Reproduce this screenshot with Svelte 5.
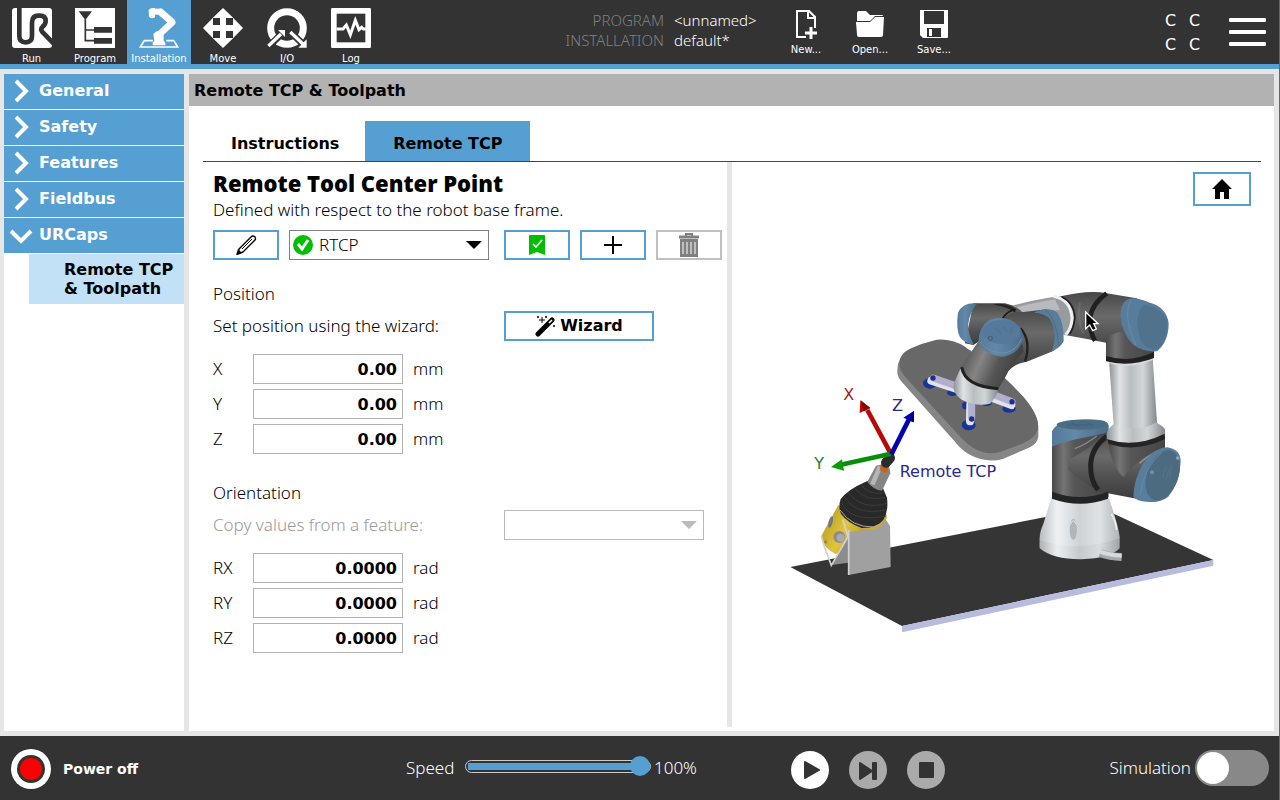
<script lang="ts">
  const sections = ['General', 'Safety', 'Features', 'Fieldbus', 'URCaps'];

  let openSection = $state('URCaps');
  let activeView = $state('Installation');
  let activeTab = $state('Remote TCP');
  let speed = $state(100);
  let simulation = $state(false);

  let position = $state([
    { axis: 'X', value: '0.00' },
    { axis: 'Y', value: '0.00' },
    { axis: 'Z', value: '0.00' },
  ]);

  let orientation = $state([
    { axis: 'RX', value: '0.0000' },
    { axis: 'RY', value: '0.0000' },
    { axis: 'RZ', value: '0.0000' },
  ]);
</script>

{#snippet viewButton(name: string, icon: any)}
  <button class="view" class:active={activeView === name} onclick={() => (activeView = name)}>
    <svg width="40" height="40" viewBox="0 0 120 120" fill="none">{@render icon()}</svg>
    <span>{name}</span>
  </button>
{/snippet}

{#snippet runIcon()}
  <rect width="120" height="120" rx="9" fill="#fff" />
  <path d="M22 -4V84Q22 103 41 103Q60 103 60 84V44Q60 23 80 23H84Q101 23 101 39Q101 49 92 56Q84 63 91 72L126 108" stroke="#333" stroke-width="14" />
{/snippet}

{#snippet programIcon()}
  <rect width="120" height="120" fill="#fff" />
  <path d="M11 10H51L31 36Z" fill="#333" />
  <path d="M57 57h54v17H57zM57 90h54v17H57z" fill="#333" />
  <path d="M31 34V98H57M31 66H57" stroke="#333" stroke-width="5" />
{/snippet}

{#snippet installIcon()}
  <path d="M42 98H16L4 117H116L104 98H82" stroke="#fff" stroke-width="5" />
  <path d="M38 11H68" stroke="#fff" stroke-width="18" />
  <path d="M29 6Q32 1 40 0H48V28Q38 34 30 26Z" fill="#fff" />
  <path d="M66 13L98 41" stroke="#fff" stroke-width="21" stroke-linecap="round" />
  <path d="M99 44L60 80" stroke="#fff" stroke-width="20" stroke-linecap="round" />
  <path d="M43 78Q58 60 74 78V98L79 104V112H41V104L46 98Z" fill="#fff" />
{/snippet}

{#snippet moveIcon()}
  <path d="M60 0L91 30H29zM60 120L91 90H29zM0 60L30 29V91zM120 60L90 29V91z" fill="#fff" />
  <path d="M60 20V100M20 60H100" stroke="#fff" stroke-width="18" />
{/snippet}

{#snippet ioIcon()}
  <circle cx="60" cy="60" r="49" stroke="#fff" stroke-width="21" />
  <path d="M4 116L50 72M70 72L116 116" stroke="#333" stroke-width="20" />
  <path d="M30 60H60V92zM88 120H124V88z" fill="#333" />
  <path d="M4 114L42 78M70 72L108 108" stroke="#fff" stroke-width="10" />
  <path d="M33 66H54V87zM94 119H119V94z" fill="#fff" />
{/snippet}

{#snippet logIcon()}
  <rect width="120" height="120" rx="4" fill="#fff" />
  <rect x="17" y="17" width="86" height="86" fill="#333" />
  <path d="M17 63H36L46 51L58 80L73 37L84 65L92 58L97 63H104" stroke="#fff" stroke-width="9" />
{/snippet}

<div class="app">
  <header>
    <nav class="views">
      {@render viewButton('Run', runIcon)}
      {@render viewButton('Program', programIcon)}
      {@render viewButton('Installation', installIcon)}
      {@render viewButton('Move', moveIcon)}
      {@render viewButton('I/O', ioIcon)}
      {@render viewButton('Log', logIcon)}
    </nav>

    <dl class="files">
      <dt>PROGRAM</dt>
      <dd>&lt;unnamed&gt;</dd>
      <dt>INSTALLATION</dt>
      <dd>default*</dd>
    </dl>

    <div class="file-actions">
      <button>
        <svg width="30" height="30" viewBox="0 0 30 30" fill="none" stroke="#fff" stroke-width="2">
          <path d="M15 28H6V2H18L24 8V19" />
          <path d="M17 2V9H24" />
          <path d="M20 18V30M14 24H26" stroke-width="3" />
        </svg>
        <span>New...</span>
      </button>
      <button>
        <svg width="30" height="30" viewBox="0 0 30 30" fill="#fff">
          <path d="M2 12V4Q2 2 4 2H11L15 6H27Q28 6 28 7H20L15 12Z" />
          <path d="M1 13H15L20 8H29L28 26Q28 28 26 28H4Q2 28 2 26Z" />
        </svg>
        <span>Open...</span>
      </button>
      <button>
        <svg width="30" height="30" viewBox="0 0 30 30">
          <path d="M1 1H29V28Q29 29 28 29H4L1 26Z" fill="#fff" />
          <path d="M5 2H25V15H5zM8 19H22V28H8z" fill="#333" />
          <path d="M10 20H13V27H10z" fill="#fff" />
        </svg>
        <span>Save...</span>
      </button>
    </div>

    <div class="checksum">
      <span>C</span><span>C</span><span>C</span><span>C</span>
    </div>
    <button class="menu" aria-label="Menu"><i></i><i></i><i></i></button>
  </header>

  <div class="body">
    <aside>
      {#each sections as section}
        <button class="section" onclick={() => (openSection = section)}>
          <svg width="24" height="24" viewBox="0 0 24 24" fill="none" stroke="#fff" stroke-width="4">
            {#if openSection === section}
              <path d="M2 8L12 18L22 8" />
            {:else}
              <path d="M7 2L17 12L7 22" />
            {/if}
          </svg>
          {section}
        </button>
      {/each}
      <a class="sub" href="#remote-tcp">Remote TCP<br />&amp; Toolpath</a>
    </aside>

    <main>
      <h1>Remote TCP &amp; Toolpath</h1>

      <div class="tabs">
        {#each ['Instructions', 'Remote TCP'] as tab}
          <button class:active={activeTab === tab} onclick={() => (activeTab = tab)}>{tab}</button>
        {/each}
      </div>

      <div class="panels">
        <section class="form">
          <h2>Remote Tool Center Point</h2>
          <p>Defined with respect to the robot base frame.</p>

          <div class="toolbar">
            <button class="btn" aria-label="Rename">
              <svg width="22" height="22" viewBox="0 0 22 22" fill="none" stroke="#000" stroke-width="1.4">
                <path d="M4 15L16 3Q18 1 20 3Q21 5 20 6L8 18L3 20Z" />
                <path d="M7 15L17 5" stroke-width="1" />
                <path d="M1 21L3 15L7 19Z" fill="#000" stroke="none" />
              </svg>
            </button>
            <div class="combo tcp">
              <svg class="check" width="20" height="20" viewBox="0 0 20 20">
                <circle cx="10" cy="10" r="10" fill="#00be00" />
                <path d="M5 9L9 14L15 5" fill="none" stroke="#fff" stroke-width="3" />
              </svg>
              <select aria-label="Tool center point">
                <option>RTCP</option>
              </select>
              <svg class="arrow" width="16" height="8" viewBox="0 0 16 8"><path d="M0 0H16L8 8Z" /></svg>
            </div>
            <button class="btn" aria-label="Set as default">
              <svg width="16" height="20" viewBox="0 0 16 20">
                <path d="M0 1Q0 0 1 0H15Q16 0 16 1V20L8 17L0 20Z" fill="#00be00" />
                <path d="M4 9L7 12L13 5" fill="none" stroke="#fff" stroke-width="1.6" />
              </svg>
            </button>
            <button class="btn" aria-label="Add">
              <svg width="18" height="18" viewBox="0 0 18 18"><path d="M9 0V18M0 9H18" stroke="#000" stroke-width="2" /></svg>
            </button>
            <button class="btn" aria-label="Delete" disabled>
              <svg width="22" height="24" viewBox="0 0 22 24" fill="none">
                <path d="M1 4H21" stroke="#808080" stroke-width="3" />
                <path d="M8 3V1H14V3" stroke="#808080" stroke-width="2" />
                <path d="M2 6H20V24H2Z" fill="#808080" />
                <path d="M5 9V21M9 9V21M13 9V21M17 9V21" stroke="#fff" stroke-width="1" />
              </svg>
            </button>
          </div>

          <h3>Position</h3>
          <div class="source">
            <span>Set position using the wizard:</span>
            <button class="btn wizard">
              <svg width="21" height="21" viewBox="0 0 21 21">
                <path d="M3 18L17 4" stroke="#000" stroke-width="5" stroke-linecap="round" />
                <path d="M14 7L17 4" stroke="#fff" stroke-width="1.6" />
                <path d="M7 1V7M4 4H10M3 0V2M2 1H4M11 0V2M10 1H12M19 9V11M18 10H20" stroke="#000" />
              </svg>
              Wizard
            </button>
          </div>
          <div class="fields">
            {#each position as field}
              <label for={field.axis}>{field.axis}</label>
              <input id={field.axis} type="text" bind:value={field.value} />
              <span>mm</span>
            {/each}
          </div>

          <h3>Orientation</h3>
          <div class="source disabled">
            <label for="feature">Copy values from a feature:</label>
            <div class="combo">
              <select id="feature" disabled><option></option></select>
              <svg class="arrow" width="16" height="8" viewBox="0 0 16 8"><path d="M0 0H16L8 8Z" /></svg>
            </div>
          </div>
          <div class="fields">
            {#each orientation as field}
              <label for={field.axis}>{field.axis}</label>
              <input id={field.axis} type="text" bind:value={field.value} />
              <span>rad</span>
            {/each}
          </div>
        </section>

        <section class="preview">
          <button class="btn home" aria-label="Home">
            <svg width="20" height="20" viewBox="0 0 20 20"><path d="M10 0L20 10H17V20H12V13H8V20H3V10H0Z" /></svg>
          </button>

          <svg class="scene" viewBox="0 0 1350 1080">
            <defs>
              <linearGradient id="metal">
                <stop offset="0" stop-color="#8d9294" />
                <stop offset=".22" stop-color="#dfe3e5" />
                <stop offset=".45" stop-color="#b9bec1" />
                <stop offset=".7" stop-color="#d2d6d8" />
                <stop offset="1" stop-color="#82888a" />
              </linearGradient>
              <linearGradient id="cone">
                <stop offset="0" stop-color="#aab0b3" />
                <stop offset=".22" stop-color="#eceff1" />
                <stop offset=".5" stop-color="#c4c9cc" />
                <stop offset=".75" stop-color="#d9dddf" />
                <stop offset="1" stop-color="#9ea4a7" />
              </linearGradient>
              <linearGradient id="dark">
                <stop offset="0" stop-color="#484848" />
                <stop offset=".2" stop-color="#747474" />
                <stop offset=".4" stop-color="#565656" />
                <stop offset="1" stop-color="#454545" />
              </linearGradient>
              <linearGradient id="darkDown" x2="0" y2="1">
                <stop offset="0" stop-color="#484848" />
                <stop offset=".35" stop-color="#6a6a6a" />
                <stop offset=".65" stop-color="#525252" />
                <stop offset="1" stop-color="#3c3c3c" />
              </linearGradient>
              <linearGradient id="barrel" x1="0" y1=".3" x2="1" y2=".75">
                <stop offset="0" stop-color="#444" />
                <stop offset=".35" stop-color="#858585" />
                <stop offset=".6" stop-color="#555" />
                <stop offset="1" stop-color="#343434" />
              </linearGradient>
              <linearGradient id="blue">
                <stop offset="0" stop-color="#55799a" />
                <stop offset=".4" stop-color="#6289a8" />
                <stop offset="1" stop-color="#4b6c87" />
              </linearGradient>
              <linearGradient id="yellow" x2="1" y2=".4">
                <stop offset="0" stop-color="#a8901d" />
                <stop offset=".5" stop-color="#e2c53d" />
                <stop offset="1" stop-color="#a58b20" />
              </linearGradient>
            </defs>

            <!-- table -->
            <path d="M31 861L936 684L990 696L1300 840L366 1038Z" fill="#353535" />
            <path d="M366 1038L1300 840V857L366 1057Z" fill="#b7bbdd" />

            <!-- base and shoulder -->
            <g transform="translate(690 360)">
              <path d="M125 290L100 372Q86 400 89 445Q130 479 215 478Q300 475 329 445V410Q325 375 295 290Z" fill="url(#cone)" />
              <path d="M125 290L100 372Q86 400 89 420Q200 460 329 415Q325 375 295 290Z" fill="#fff" opacity=".18" />
              <ellipse cx="190" cy="388" rx="11" ry="32" fill="#b0b6b9" />
              <path d="M181 374Q190 350 199 374" stroke="#e5e8e9" stroke-width="3" fill="none" />
              <path d="M304 342Q316 360 320 390" stroke="#eef1f2" stroke-width="5" fill="none" />
              <path d="M270 459Q300 470 335 471" stroke="#a2a9ac" stroke-width="24" fill="none" />
              <path d="M270 455Q300 466 335 467" stroke="#d6dadc" stroke-width="12" fill="none" />
              <path d="M126 120L292 75L296 290Q210 320 126 292Z" fill="url(#dark)" />
              <path d="M175 180Q235 150 285 98L465 105V145L380 296L270 275Q215 245 175 210Z" fill="url(#darkDown)" />
              <path d="M295 120Q300 190 340 232Q370 190 430 155L465 140V105Q380 145 295 120Z" fill="url(#dark)" />
              <path d="M194 146Q230 132 260 108" stroke="#888" stroke-width="4" fill="none" />
              <path d="M389 190Q410 170 440 156" stroke="#999" stroke-width="4" fill="none" />
              <path d="M291 109Q246 140 242 192Q240 240 264 270" stroke="#222" stroke-width="15" fill="none" />
              <path d="M126 275Q210 307 294 275V296Q210 326 126 296Z" fill="#242424" />
              <path d="M126 140V94Q133 75 165 65Q220 53 275 61Q293 64 296 76V96Q270 104 220 113Q160 124 126 140Z" fill="url(#blue)" />
              <ellipse cx="215" cy="74" rx="75" ry="15" fill="#4b6c85" />
              <path d="M172 75h70M185 70l25 8M230 69l20 6" stroke="#42627a" stroke-width="3" />
              <path d="M370 290Q372 235 400 190Q430 145 472 142Q512 148 512 185Q510 245 475 290Q448 311 410 305Q380 303 370 290Z" fill="#587e9d" />
              <ellipse cx="458" cy="226" rx="47" ry="78" transform="rotate(20 458 226)" fill="#4c6a80" />
              <path d="M390 285Q400 205 455 157" stroke="#6688a3" stroke-width="3" fill="none" />
              <path d="M460 238Q457 215 470 202M468 240Q475 215 480 205M484 195L480 238" stroke="#587389" stroke-width="3" fill="none" />
              <circle cx="426" cy="217" r="6" fill="#6f93ae" />
              <circle cx="503" cy="174" r="5" fill="#8cabc2" />
            </g>

            <!-- elbow, forearm and wrist -->
            <g transform="translate(330 0)">
              <path d="M657 240L672 450Q740 480 802 440L788 235Z" fill="url(#metal)" />
              <path d="M671 432Q654 445 650 462V478Q730 510 825 465V448Q816 436 798 427Q745 462 671 432Z" fill="url(#metal)" />
              <path d="M652 478Q735 505 824 461V478Q740 518 656 492Z" fill="#242424" />
              <path d="M658 247Q720 266 790 237" stroke="#d6dadc" stroke-width="5" fill="none" />

              <path d="M505 50Q600 28 650 40L740 55L790 100V228Q720 255 648 234V188L595 178L525 165Z" fill="url(#darkDown)" />
              <path d="M648 188Q650 165 690 155L792 200V228Q720 255 648 234Z" fill="url(#dark)" />
              <path d="M648 228Q720 250 792 216V234Q720 262 648 244Z" fill="#202020" />
              <path d="M650 40Q605 72 600 115Q598 155 615 182" stroke="#202020" stroke-width="14" fill="none" />
              <path d="M570 70Q560 115 580 160" stroke="#777" stroke-width="6" fill="none" opacity=".6" />
              <path d="M692 110Q690 65 718 56Q738 50 780 68Q830 82 836 130Q836 185 802 213Q770 220 730 195Q696 160 692 110Z" fill="#587d9b" />
              <path d="M760 75Q810 80 832 120Q836 180 802 209Q750 210 745 150Q735 105 760 75Z" fill="#50728d" />
              <path d="M725 58Q695 105 738 195" stroke="#6487a3" stroke-width="4" fill="none" />

              <path d="M370 76Q430 60 505 49Q548 58 552 112Q550 148 527 166L430 130Z" fill="#979c9e" />
              <path d="M380 82Q430 68 495 58L510 90L430 95L400 98Z" fill="#cdd1d3" opacity=".6" />
              <path d="M490 49Q543 58 546 115Q544 148 527 164" stroke="#eef1f2" stroke-width="9" fill="none" />
              <path d="M515 50Q552 68 555 112Q552 145 538 163" stroke="#222" stroke-width="5" fill="none" />

              <path d="M250 70H345Q380 76 400 100L340 140L250 195L225 190Z" fill="url(#darkDown)" />
              <path d="M310 72Q350 68 378 88L375 98Q350 80 320 76Z" fill="#242424" />
              <path d="M262 70Q218 66 204 98Q197 145 210 172Q225 192 252 194Q213 130 262 70Z" fill="url(#blue)" />

              <!-- workpiece -->
              <path d="M22 270Q22 230 60 208L140 182L240 210L400 350Q446 405 445 445V470Q442 490 420 502L340 536Q290 552 235 522Q210 505 195 485L35 305Q20 290 22 270Z" fill="#858585" />
              <path d="M28 250Q28 222 60 206Q100 188 140 179Q185 175 225 200L345 295Q415 360 434 400Q448 428 443 450Q436 474 400 490L330 516Q290 528 252 505Q230 492 215 475L45 290Q28 270 28 250Z" fill="#686868" />

              <!-- vacuum gripper -->
              <g fill="#173597">
                <ellipse cx="120" cy="310" rx="21" ry="16" />
                <ellipse cx="187" cy="338" rx="16" ry="10" />
                <ellipse cx="226" cy="377" rx="10" ry="11" />
                <ellipse cx="290" cy="370" rx="15" ry="8" />
                <ellipse cx="357" cy="386" rx="20" ry="12" />
                <ellipse cx="236" cy="435" rx="21" ry="16" />
              </g>
              <g stroke-linecap="round" fill="none">
                <path d="M124 302L200 327M310 355L364 375M241 372L240 424" stroke="#e2e2ee" stroke-width="24" />
                <path d="M130 294L205 320M312 344L366 365M245 370L245 414" stroke="#b0b0cc" stroke-width="21" />
              </g>
              <g fill="#1b318c">
                <circle cx="129" cy="294" r="8" />
                <circle cx="366" cy="365" r="8" />
                <circle cx="245" cy="417" r="8" />
              </g>

              <path d="M340 115Q360 94 400 96L470 88L520 185L490 213L410 245Q370 250 345 285Z" fill="url(#darkDown)" />
              <path d="M338 115Q350 94 376 88" stroke="#1d1d1d" stroke-width="5" fill="none" />
              <path d="M432 98Q475 78 502 98Q523 130 521 184Q508 207 485 213Q505 160 480 118Q462 98 432 98Z" fill="#587d9b" />
              <path d="M468 90Q500 120 507 198" stroke="#4b6d88" stroke-width="3" fill="none" />
              <path d="M392 145Q425 185 405 244" stroke="#202020" stroke-width="7" fill="none" />
              <path d="M268 180L214 260Q205 295 320 332Q345 300 360 262L400 215Q400 150 330 140Z" fill="url(#barrel)" />
              <path d="M212 265L192 308Q184 338 215 359Q260 381 300 371Q318 355 325 328Q250 330 212 265Z" fill="url(#metal)" />
              <path d="M215 262Q225 320 325 326" stroke="#202020" stroke-width="9" fill="none" />
              <path d="M265 188Q266 140 297 121Q335 105 372 125Q402 147 399 180Q385 222 340 230Q284 225 265 188Z" fill="url(#blue)" />
              <ellipse cx="335" cy="156" rx="56" ry="36" fill="#55799a" />
              <path d="M271 186Q300 222 345 219Q382 210 395 175" stroke="#6c91ad" stroke-width="3" fill="none" />
              <path d="M315 142l20 20M340 140l12 14M365 145l-3 18" stroke="#4e708b" stroke-width="3" />
              <circle cx="301" cy="175" r="6" fill="none" stroke="#3c5c75" stroke-width="3" />
            </g>

            <!-- dispenser, coordinate axes -->
            <g transform="translate(0 150)">
              <path d="M175 525L124 618Q125 650 165 671L188 672L300 600Z" fill="url(#yellow)" />
              <ellipse cx="152" cy="576" rx="6" ry="18" transform="rotate(15 152 576)" fill="#777" />
              <circle cx="178" cy="621" r="18" fill="#8d8d8d" />
              <circle cx="182" cy="623" r="12" fill="#aaa" />
              <circle cx="137" cy="636" r="5" fill="#a08a3a" />
              <path d="M155 705L204 622V698Z" fill="#8c8c8c" />
              <path d="M188 568L206 606Q265 605 316 566L330 588L332 711L206 735V606Z" fill="#a0a0a0" />
              <path d="M124 616Q125 630 154 706L204 620L188 568M206 600V735" stroke="#d2d2d2" stroke-width="5" fill="none" />
              <path d="M178 540Q200 580 250 594Q300 592 320 552L320 565Q305 595 278 600Q220 600 180 550Z" fill="#c8aa34" />
              <path d="M262 453Q200 480 182 508Q174 530 183 552Q205 580 245 594Q290 595 310 570Q326 545 321 503L309 475Z" fill="#292929" />
              <g fill="none" stroke="#3c3c3c" stroke-width="3">
                <path d="M184 518Q215 580 318 558" />
                <path d="M193 500Q230 560 320 539" />
                <path d="M205 487Q245 542 321 520" />
                <path d="M224 475Q262 518 316 502" />
                <path d="M242 466Q275 498 312 488" />
              </g>
              <path d="M180 540Q215 592 280 591Q300 585 313 570" fill="none" stroke="#a7a7a7" stroke-width="3" />
              <path d="M288 407L262 455Q280 480 306 482L331 430Q330 405 310 402Z" fill="#858585" />
              <path d="M300 410L277 464" stroke="#b5b5b5" stroke-width="14" />
              <path d="M309 425L318 400" stroke="#c4651b" stroke-width="23" />
              <path d="M318 398L330 384" stroke="#2c2c2c" stroke-width="30" stroke-linecap="round" />
              <path d="M332 370L262 240" stroke="#b80808" stroke-width="14" />
              <path d="M333 371L182 404" stroke="#0a8e0a" stroke-width="14" />
              <path d="M334 373L388 266" stroke="#0000b0" stroke-width="14" />
              <path d="M241 211L239 249L271 234Z" fill="#bd0909" />
              <path d="M242 211L252 244L271 234Z" fill="#850808" />
              <path d="M153 411L186 388L192 422Z" fill="#079d07" />
              <path d="M402 242L370 263L402 277Z" fill="#0000b8" />
              <path d="M402 242L388 272L402 277Z" fill="#00006e" />
              <g font-size="48">
                <text x="190" y="211" fill="#a41e1e">X</text>
                <text x="336" y="242" fill="#29298e">Z</text>
                <text x="103" y="417" fill="#287d28">Y</text>
                <text x="359" y="440" fill="#29298e">Remote TCP</text>
              </g>
            </g>

            <path d="M917 96V146L929 135L938 152L949 147L941 131H954Z" fill="#000" stroke="#fff" stroke-width="4" />
          </svg>
        </section>
      </div>
    </main>
  </div>

  <footer>
    <button class="power">
      <svg width="40" height="40" viewBox="0 0 40 40">
        <circle cx="20" cy="20" r="20" fill="#fff" />
        <circle cx="20" cy="20" r="14" fill="#333" />
        <circle cx="20" cy="20" r="11" fill="#f00" />
      </svg>
      Power off
    </button>

    <div class="speed">
      <label for="speed">Speed</label>
      <input id="speed" type="range" min="0" max="100" bind:value={speed} />
      <output for="speed">{speed}%</output>
    </div>

    <div class="playback">
      <button aria-label="Play">
        <svg width="38" height="38" viewBox="0 0 38 38">
          <circle cx="19" cy="19" r="19" fill="#fff" />
          <path d="M14 11L28 19L14 27Z" fill="#333" stroke="#333" stroke-width="2" stroke-linejoin="round" />
        </svg>
      </button>
      <button aria-label="Step" disabled>
        <svg width="38" height="38" viewBox="0 0 38 38">
          <circle cx="19" cy="19" r="19" fill="#aaa" />
          <path d="M11 12L23 20L11 28Z" fill="#333" stroke="#333" stroke-width="2" stroke-linejoin="round" />
          <rect x="23" y="11" width="5" height="18" rx="1" fill="#333" />
        </svg>
      </button>
      <button aria-label="Stop" disabled>
        <svg width="38" height="38" viewBox="0 0 38 38">
          <circle cx="19" cy="19" r="19" fill="#aaa" />
          <rect x="12" y="11" width="15" height="16" rx="1" fill="#333" />
        </svg>
      </button>
    </div>

    <label class="simulation">
      Simulation
      <input type="checkbox" bind:checked={simulation} />
    </label>
  </footer>
</div>

<style>
  :global(body) {
    background: #e6e6e6;
  }

  .app {
    --blue: #569fd3;
    --dark: #333;
    box-sizing: border-box;
    display: flex;
    flex-direction: column;
    min-height: 100vh;
    border-right: 1px solid #666;
    background: #e6e6e6;
    color: #000;
    font-family: 'Noto Sans', sans-serif;
    font-size: 17px;
    font-weight: 300;
    line-height: 20px;
  }

  button,
  input,
  select {
    box-sizing: border-box;
    margin: 0;
    padding: 0;
    border: none;
    background: none;
    color: inherit;
    font: inherit;
  }

  svg {
    display: block;
    flex: none;
  }

  .section,
  .sub,
  h1,
  .tabs button,
  .btn,
  .fields input {
    font-family: 'DejaVu Sans', sans-serif;
    font-size: 16px;
    font-weight: 700;
  }

  header {
    display: flex;
    height: 64px;
    border-bottom: 5px solid var(--blue);
    background: var(--dark);
    color: #fff;
  }

  .views {
    display: flex;
    flex: 1;
  }

  .view,
  .file-actions button {
    display: flex;
    flex-direction: column;
    align-items: center;
    gap: 5px;
    width: 64px;
    padding-top: 8px;
    font-family: 'DejaVu Sans', sans-serif;
    font-size: 10px;
    font-weight: 400;
    line-height: 12px;
  }

  .view:first-child {
    width: 63px;
  }

  .view.active {
    background: var(--blue);
  }

  .files {
    display: grid;
    grid-template-columns: auto 90px;
    align-content: start;
    column-gap: 10px;
    margin: 10px 0 0;
    font-size: 15px;
  }

  dt {
    color: #808080;
    text-align: right;
  }

  dd {
    margin: 0;
  }

  .file-actions {
    display: flex;
    margin-left: 10px;
  }

  .file-actions button {
    padding-top: 9px;
  }

  .checksum {
    display: grid;
    grid-template-columns: 24px 24px;
    align-content: center;
    margin-left: 199px;
    padding-top: 2px;
    font-family: 'DejaVu Sans', sans-serif;
    font-size: 16px;
    font-weight: 400;
    line-height: 24px;
  }

  .menu {
    display: flex;
    flex-direction: column;
    gap: 8px;
    width: 37px;
    margin: 18px 13px 0 16px;
  }

  .menu i {
    height: 4px;
    border-radius: 1px;
    background: #fff;
  }

  .body {
    display: flex;
    flex: 1;
    gap: 5px;
    padding: 5px 5px 5px 4px;
  }

  aside {
    width: 180px;
    background: #fff;
  }

  .section {
    display: flex;
    align-items: center;
    gap: 6px;
    width: 100%;
    height: 36px;
    padding: 0 5px 2px;
    border-bottom: 1px solid #fff;
    background: var(--blue);
    color: #fff;
  }

  .sub {
    display: block;
    margin-left: 25px;
    padding: 6px 0 6px 35px;
    background: #c2e0f6;
    color: #000;
    line-height: 19px;
    text-decoration: none;
  }

  main {
    display: flex;
    flex-direction: column;
    flex: 1;
    background: #fff;
  }

  h1 {
    margin: 0;
    padding: 7px 5px 5px;
    background: #b2b2b2;
  }

  .tabs {
    display: flex;
    margin: 15px 13px 0 14px;
    padding-left: 2px;
    border-bottom: 1px solid #444;
  }

  .tabs button {
    min-width: 160px;
    height: 40px;
    padding: 5px 26px 0;
  }

  .tabs .active {
    min-width: 165px;
    background: var(--blue);
  }

  .panels {
    display: flex;
    flex: 1;
    padding-bottom: 4px;
  }

  .form {
    width: 514px;
    padding: 7px 0 0 24px;
    border-right: 5px solid #e6e6e6;
  }

  h2 {
    margin: 0 0 1px;
    font-family: 'Open Sans', sans-serif;
    font-size: 22px;
    font-weight: 800;
    line-height: 28px;
  }

  h3 {
    margin: 24px 0 7px;
    font-size: 17px;
    font-weight: inherit;
  }

  .fields + h3 {
    margin-top: 29px;
  }

  p {
    margin: 0 0 8px;
    line-height: 24px;
  }

  .toolbar {
    display: flex;
    gap: 10px;
  }

  .btn {
    display: flex;
    align-items: center;
    justify-content: center;
    gap: 4px;
    width: 66px;
    height: 30px;
    border: 2px solid var(--blue);
    background: #fff;
  }

  .btn:disabled {
    border-color: #c0c0c0;
  }

  .wizard {
    width: 150px;
  }

  .combo {
    position: relative;
    width: 200px;
    height: 30px;
  }

  .tcp {
    margin-right: 5px;
  }

  .combo select {
    width: 100%;
    height: 100%;
    padding: 0 28px 0 29px;
    border: 1px solid #808080;
    appearance: none;
  }

  .combo select:disabled {
    border-color: #bbb;
    opacity: 1;
  }

  .check {
    position: absolute;
    top: 5px;
    left: 4px;
  }

  .arrow {
    position: absolute;
    top: 11px;
    right: 7px;
    pointer-events: none;
  }

  .source {
    display: grid;
    grid-template-columns: 291px auto;
    justify-content: start;
    align-items: center;
    margin-bottom: 13px;
  }

  .disabled {
    color: #999;
    fill: #bbb;
  }

  .fields {
    display: grid;
    grid-template-columns: 30px 150px auto;
    justify-content: start;
    align-items: center;
    gap: 5px 10px;
  }

  .fields input {
    width: 100%;
    height: 30px;
    padding: 0 5px;
    border: 1px solid #b2b2b2;
    text-align: right;
  }

  .preview {
    display: flex;
    flex: 1;
    flex-direction: column;
    padding: 10px 23px 0 48px;
  }

  .home {
    align-self: flex-end;
    width: 58px;
    height: 34px;
  }

  .scene {
    width: 450px;
    margin-top: 74px;
    font-family: 'DejaVu Sans', sans-serif;
    font-weight: 400;
  }

  footer {
    display: grid;
    grid-template-columns: 395px 385px 1fr auto;
    align-items: center;
    height: 64px;
    padding: 0 10px 0 11px;
    background: var(--dark);
    color: #fff;
  }

  .power {
    display: flex;
    align-items: center;
    gap: 12px;
    padding-top: 2px;
    font-family: 'DejaVu Sans', sans-serif;
    font-size: 14px;
    font-weight: 700;
  }

  .speed {
    display: flex;
    align-items: center;
  }

  .speed label {
    width: 49px;
  }

  .speed input {
    width: 186px;
    height: 13px;
    margin: 0 3px 4px 10px;
    border: 1px solid #ccc;
    border-radius: 7px;
    background: linear-gradient(var(--blue), var(--blue)) 2px center / 180px 7px no-repeat;
    appearance: none;
  }

  .speed input::-webkit-slider-thumb {
    width: 20px;
    height: 20px;
    border-radius: 50%;
    background: var(--blue);
    appearance: none;
  }

  .playback {
    display: flex;
    gap: 20px;
    padding-top: 4px;
  }

  .simulation {
    display: flex;
    align-items: center;
    gap: 4px;
  }

  .simulation input {
    width: 74px;
    height: 36px;
    padding: 2px;
    border-radius: 18px;
    background: #888;
    appearance: none;
  }

  .simulation input::before {
    content: '';
    display: block;
    width: 32px;
    height: 32px;
    border-radius: 50%;
    background: #fff;
  }

  .simulation input:checked::before {
    margin-left: auto;
  }
</style>
